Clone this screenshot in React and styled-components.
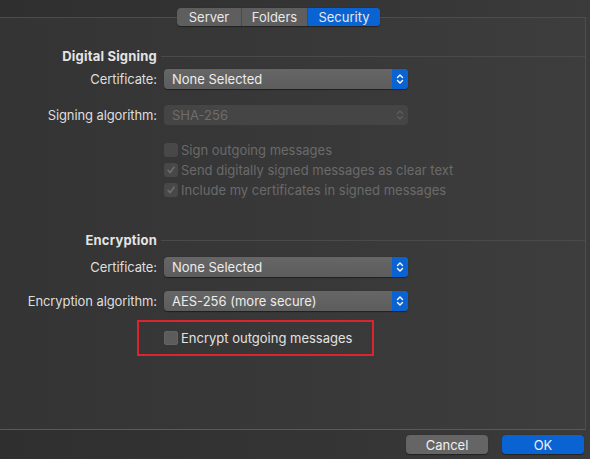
import React from "react";
import styled, { createGlobalStyle } from "styled-components";

const Global = createGlobalStyle`
  html, body { margin: 0; padding: 0; }
  body {
    background: #313131;
    font-family: Inter, "Liberation Sans", sans-serif;
    -webkit-font-smoothing: antialiased;
  }
`;

const Page = styled.div`
  width: 590px;
  height: 459px;
  overflow: hidden;
  background: linear-gradient(90deg, #2f2f2f 0%, #353535 60%, #3b3b3b 100%);
  display: flex;
  flex-direction: column;
`;

const Box = styled.div`
  position: relative;
  margin-top: 17px;
  width: 586px;
  height: 413px;
  box-sizing: border-box;
  border-top: 1px solid #4d4d4d;
  border-bottom: 1px solid #5a5a5a;
  border-right: 1px solid #4d4d4d;
  background: linear-gradient(90deg, #343434 0%, #393939 60%, #3d3d3d 100%);
  display: flex;
  flex-direction: column;
  padding-top: 30px;
`;

const Segmented = styled.div`
  position: absolute;
  top: -10px;
  left: 177px;
  display: flex;
  height: 18px;
  border-radius: 4px;
  overflow: hidden;
  background: #5e5e5e;
  box-shadow: 0 0.5px 1px rgba(0, 0, 0, 0.4);
`;

const Segment = styled.div`
  width: ${(p) => p.$w}px;
  display: flex;
  align-items: center;
  justify-content: center;
  font-size: 13px;
  color: #e8e8e8;
  background: ${(p) => (p.$active ? "#0a63d3" : "transparent")};
  border-left: ${(p) => (p.$first ? "none" : "1px solid #4a4a4a")};
  box-sizing: border-box;
`;

const Row = styled.div`
  display: flex;
  align-items: center;
  height: ${(p) => p.$h || 20}px;
  margin-top: ${(p) => p.$mt || 0}px;
`;

const Label = styled.div`
  width: 157px;
  text-align: right;
  font-size: 13px;
  color: #dedede;
  padding-right: 7px;
  box-sizing: content-box;
  letter-spacing: -0.1px;
  white-space: nowrap;
`;

const Heading = styled(Label)`
  font-weight: 700;
  color: #e4e4e4;
  padding-right: 4px;
  letter-spacing: 0.2px;
`;

const Rule = styled.div`
  flex: 1;
  height: 1px;
  background: #4a4a4a;
`;

const Popup = styled.div`
  width: 244px;
  height: 20px;
  border-radius: 4px;
  display: flex;
  align-items: center;
  background: ${(p) =>
    p.$disabled ? "#454545" : "linear-gradient(180deg, #666 0%, #5c5c5c 100%)"};
  box-shadow: ${(p) => (p.$disabled ? "none" : "0 0.5px 1px rgba(0,0,0,0.45)")};
  overflow: hidden;
`;

const PopupText = styled.div`
  flex: 1;
  padding-left: 8px;
  font-size: 13px;
  color: ${(p) => (p.$disabled ? "#6d6d6d" : "#ececec")};
`;

const Stepper = styled.div`
  width: 16px;
  height: 100%;
  display: flex;
  align-items: center;
  justify-content: center;
  background: ${(p) => (p.$disabled ? "transparent" : "#0a63d3")};
`;

const CheckRow = styled.div`
  display: flex;
  align-items: center;
  height: 18px;
  margin-top: ${(p) => p.$mt || 0}px;
  padding-left: 164px;
`;

const Box14 = styled.div`
  width: 14px;
  height: 14px;
  border-radius: 3px;
  background: ${(p) => (p.$disabled ? "#484848" : "#5c5c5c")};
  box-shadow: ${(p) => (p.$disabled ? "none" : "inset 0 0 0 0.5px #6a6a6a")};
  display: flex;
  align-items: center;
  justify-content: center;
  margin-right: 3px;
`;

const CheckText = styled.div`
  font-size: 13px;
  color: ${(p) => (p.$disabled ? "#6a6a6a" : "#e2e2e2")};
  white-space: nowrap;
`;

const Highlight = styled.div`
  margin-top: ${(p) => p.$mt}px;
  margin-left: 137px;
  width: 237px;
  height: 36px;
  box-sizing: border-box;
  border: 2px solid #dc2430;
  display: flex;
  align-items: center;
  padding-left: 25px;
`;

const Footer = styled.div`
  display: flex;
  justify-content: flex-end;
  gap: 14px;
  padding-right: 6px;
  margin-top: 5px;
`;

const Button = styled.div`
  width: 82px;
  height: 19px;
  border-radius: 4px;
  display: flex;
  align-items: center;
  justify-content: center;
  font-size: 13px;
  color: #f0f0f0;
  background: ${(p) => (p.$primary ? "#0a63d3" : "#656565")};
  box-shadow: 0 0.5px 1px rgba(0, 0, 0, 0.4);
`;

const Chevrons = ({ color }) => (
  <svg width="8" height="12" viewBox="0 0 8 12">
    <path
      d="M1.5 4.5 L4 2 L6.5 4.5 M1.5 7.5 L4 10 L6.5 7.5"
      fill="none"
      stroke={color}
      strokeWidth="1.4"
      strokeLinecap="round"
      strokeLinejoin="round"
    />
  </svg>
);

const Check = () => (
  <svg width="10" height="10" viewBox="0 0 10 10">
    <path
      d="M2 5.3 L4.2 7.6 L8 2.2"
      fill="none"
      stroke="#6e6e6e"
      strokeWidth="1.6"
      strokeLinecap="round"
      strokeLinejoin="round"
    />
  </svg>
);

const PopUpButton = ({ value, disabled }) => (
  <Popup $disabled={disabled}>
    <PopupText $disabled={disabled}>{value}</PopupText>
    <Stepper $disabled={disabled}>
      <Chevrons color={disabled ? "#5c5c5c" : "#ffffff"} />
    </Stepper>
  </Popup>
);

const Checkbox = ({ checked, disabled, children, mt }) => (
  <CheckRow $mt={mt}>
    <Box14 $disabled={disabled}>{checked && <Check />}</Box14>
    <CheckText $disabled={disabled}>{children}</CheckText>
  </CheckRow>
);

export default function App() {
  return (
    <>
      <Global />
      <Page>
        <Box>
          <Segmented>
            <Segment $w={64} $first>Server</Segment>
            <Segment $w={66}>Folders</Segment>
            <Segment $w={73} $active>Security</Segment>
          </Segmented>

          <Row $h={16}>
            <Heading>Digital Signing</Heading>
            <Rule />
          </Row>
          <Row $mt={5}>
            <Label>Certificate:</Label>
            <PopUpButton value="None Selected" />
          </Row>
          <Row $mt={16}>
            <Label>Signing algorithm:</Label>
            <PopUpButton value="SHA-256" disabled />
          </Row>
          <Checkbox mt={16} disabled>Sign outgoing messages</Checkbox>
          <Checkbox mt={2} disabled checked>Send digitally signed messages as clear text</Checkbox>
          <Checkbox mt={2} disabled checked>Include my certificates in signed messages</Checkbox>

          <Row $h={16} $mt={33}>
            <Heading>Encryption</Heading>
            <Rule />
          </Row>
          <Row $mt={9}>
            <Label>Certificate:</Label>
            <PopUpButton value="None Selected" />
          </Row>
          <Row $mt={14}>
            <Label>Encryption algorithm:</Label>
            <PopUpButton value="AES-256 (more secure)" />
          </Row>
          <Highlight $mt={9}>
            <Box14 />
            <CheckText>Encrypt outgoing messages</CheckText>
          </Highlight>
        </Box>
        <Footer>
          <Button>Cancel</Button>
          <Button $primary>OK</Button>
        </Footer>
      </Page>
    </>
  );
}
